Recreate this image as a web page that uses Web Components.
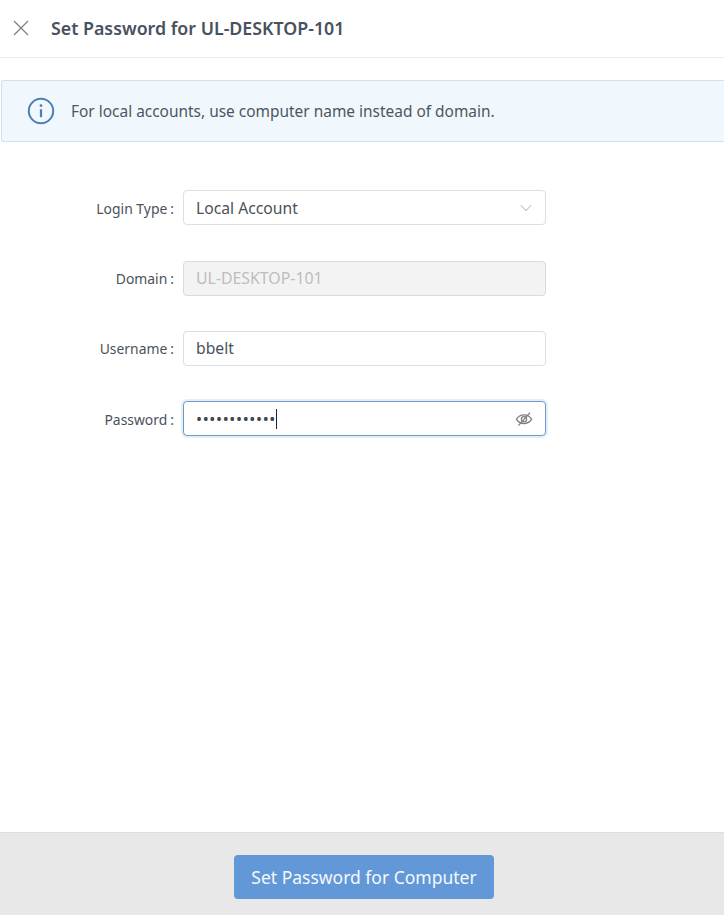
<!DOCTYPE html>
<html lang="en"><head><meta charset="utf-8"><title>Set Password</title>
<style>
html,body{margin:0;padding:0;height:100%;background:#fff}
body{font-family:"Noto Sans","Open Sans",sans-serif;}
</style></head><body>
<pw-page>
  <pw-header slot="header">Set Password for UL-DESKTOP-101</pw-header>
  <pw-alert slot="alert">For local accounts, use computer name instead of domain.</pw-alert>
  <pw-form slot="form">
    <pw-field label="Login Type" value="Local Account" kind="select"></pw-field>
    <pw-field label="Domain" value="UL-DESKTOP-101" kind="disabled"></pw-field>
    <pw-field label="Username" value="bbelt"></pw-field>
    <pw-field label="Password" value="••••••••••••" kind="password"></pw-field>
  </pw-form>
  <pw-footer slot="footer">Set Password for Computer</pw-footer>
</pw-page>
<script>
function def(name,html){
  customElements.define(name,class extends HTMLElement{
    connectedCallback(){
      if(this.shadowRoot)return;
      const r=this.attachShadow({mode:'open'});
      r.innerHTML=typeof html==='function'?html(this):html;
    }
  });
}
const F='"Noto Sans","Open Sans",sans-serif';
def('pw-page',`<style>
:host{display:flex;flex-direction:column;height:915px;width:724px;overflow:hidden;font-family:${F}}
.main{flex:1;min-height:0;display:flex;flex-direction:column}
</style><slot name="header"></slot><div class="main"><slot name="alert"></slot><slot name="form"></slot></div><slot name="footer"></slot>`);
def('pw-header',`<style>
:host{display:flex;align-items:center;height:57px;border-bottom:1px solid #ededed;box-sizing:content-box;flex:none}
svg{width:16px;height:16px;margin-left:13px;flex:none;margin-right:22px;margin-bottom:1px}
.t{font-size:17.8px;font-weight:600;white-space:nowrap;color:#48525e;padding-bottom:2px}
</style><svg viewBox="0 0 16 16" fill="none" stroke="#7d7d7d" stroke-width="1.2"><path d="M1 1L15 15M15 1L1 15"/></svg><span class="t"><slot></slot></span>`);
def('pw-alert',`<style>
:host{display:flex;align-items:center;height:60px;margin:22px 0 0 1px;background:#f1f8fd;border:1px solid #d3e0ea;border-right:none;border-radius:3px 0 0 3px;flex:none;color:#4c5661;font-size:15.45px}
svg{width:28px;height:28px;margin-left:25px;margin-right:16px;flex:none}
</style><svg viewBox="0 0 28 28" fill="none"><circle cx="14" cy="14" r="12.2" stroke="#4a7fb5" stroke-width="2"/><circle cx="14" cy="8.6" r="1.4" fill="#4a7fb5"/><path d="M14 12.2v8" stroke="#4a7fb5" stroke-width="2.2"/></svg><span><slot></slot></span>`);
def('pw-form',`<style>
:host{display:flex;flex-direction:column;gap:35.3px;padding-top:48.4px;flex:1;min-height:0}
</style><slot></slot>`);
def('pw-field',el=>{
  const k=el.getAttribute('kind')||'';
  const label=el.getAttribute('label'),v=el.getAttribute('value');
  const chev='<svg class="ic" width="12" height="8" viewBox="0 0 12 8" fill="none" stroke="#c4c4c4" stroke-width="1.1"><path d="M.8 1L6 6.6 11.2 1"/></svg>';
  const eye='<svg class="ic" width="18" height="18" viewBox="0 0 18 18" fill="none" stroke="#7e7e7e" stroke-width="1.3"><path d="M1.4 9.2C3.2 6.2 5.8 4.8 9 4.8s5.8 1.4 7.6 4.4c-1.8 3-4.4 4.4-7.6 4.4s-5.8-1.4-7.6-4.4z"/><circle cx="9" cy="9.2" r="2.6"/><path d="M3.4 15.6L15 2.6"/></svg>';
  return `<style>
:host{display:flex;align-items:stretch;height:35px;flex:none}
.l{width:174px;flex:none;display:flex;justify-content:flex-end;align-items:center;font-size:13.9px;color:#4a525b;white-space:nowrap;padding-top:1px;box-sizing:border-box}
.l b{font-weight:400;margin-left:3px}
.c{margin-left:9px;width:363px;box-sizing:border-box;border:1px solid #dcdfe3;border-radius:4px;display:flex;align-items:center;padding:0 12px 0;font-size:15.7px;color:#4a525b;background:#fff}
.c.disabled{background:#f3f3f3;color:#bdbdbd;border-color:#dadada;font-size:15.85px;padding-bottom:1px}
.c.password{border-color:#6f9bc9;box-shadow:0 0 0 2px #e4eef7;font-size:16px;color:#3f4750}
.password .v{letter-spacing:.65px}
.v{flex:1;white-space:nowrap;display:flex;align-items:center}
.caret{display:inline-block;width:1px;height:20px;background:#222;margin-left:0}
.ic{flex:none}
.select .ic{margin-right:1px}
</style><div class="l"><span>${label}</span><b>:</b></div><div class="c ${k}"><span class="v">${v}${k==='password'?'<i class="caret"></i>':''}</span>${k==='select'?chev:k==='password'?eye:''}</div>`;
});
def('pw-footer',`<style>
:host{display:flex;justify-content:center;align-items:flex-start;height:60px;padding:22px 0 0 4px;flex:none;background:#e8e8e8;border-top:1px solid #dedede}
.b{width:260px;height:44px;border-radius:4px;background:#6298d8;color:#f4f8fc;font-size:17.5px;display:flex;align-items:center;justify-content:center;white-space:nowrap}
</style><div class="b"><slot></slot></div>`);
</script>
</body></html>
